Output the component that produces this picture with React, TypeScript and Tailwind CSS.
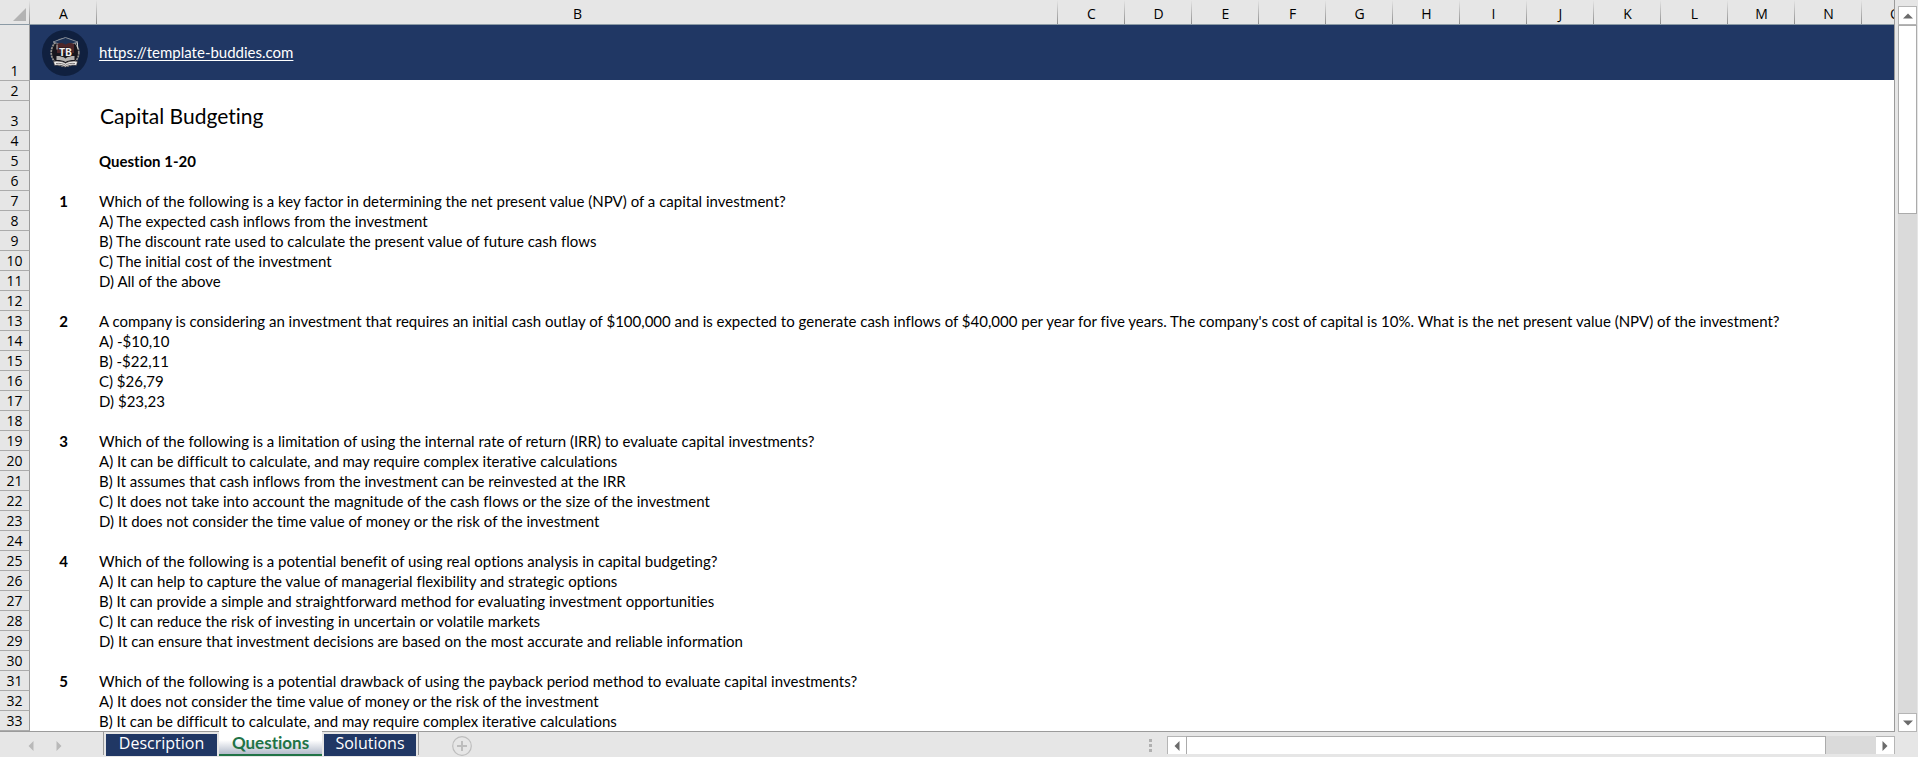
import React from "react";

type Row = { n: number; a?: string; b?: string };

const columns = ["C", "D", "E", "F", "G", "H", "I", "J", "K", "L", "M", "N", "O"];

const rows: Row[] = [
  { n: 6 },
  { n: 7, a: "1", b: "Which of the following is a key factor in determining the net present value (NPV) of a capital investment?" },
  { n: 8, b: "A) The expected cash inflows from the investment" },
  { n: 9, b: "B) The discount rate used to calculate the present value of future cash flows" },
  { n: 10, b: "C) The initial cost of the investment" },
  { n: 11, b: "D) All of the above" },
  { n: 12 },
  { n: 13, a: "2", b: "A company is considering an investment that requires an initial cash outlay of $100,000 and is expected to generate cash inflows of $40,000 per year for five years. The company's cost of capital is 10%. What is the net present value (NPV) of the investment?" },
  { n: 14, b: "A) -$10,10" },
  { n: 15, b: "B) -$22,11" },
  { n: 16, b: "C) $26,79" },
  { n: 17, b: "D) $23,23" },
  { n: 18 },
  { n: 19, a: "3", b: "Which of the following is a limitation of using the internal rate of return (IRR) to evaluate capital investments?" },
  { n: 20, b: "A) It can be difficult to calculate, and may require complex iterative calculations" },
  { n: 21, b: "B) It assumes that cash inflows from the investment can be reinvested at the IRR" },
  { n: 22, b: "C) It does not take into account the magnitude of the cash flows or the size of the investment" },
  { n: 23, b: "D) It does not consider the time value of money or the risk of the investment" },
  { n: 24 },
  { n: 25, a: "4", b: "Which of the following is a potential benefit of using real options analysis in capital budgeting?" },
  { n: 26, b: "A) It can help to capture the value of managerial flexibility and strategic options" },
  { n: 27, b: "B) It can provide a simple and straightforward method for evaluating investment opportunities" },
  { n: 28, b: "C) It can reduce the risk of investing in uncertain or volatile markets" },
  { n: 29, b: "D) It can ensure that investment decisions are based on the most accurate and reliable information" },
  { n: 30 },
  { n: 31, a: "5", b: "Which of the following is a potential drawback of using the payback period method to evaluate capital investments?" },
  { n: 32, b: "A) It does not consider the time value of money or the risk of the investment" },
  { n: 33, b: "B) It can be difficult to calculate, and may require complex iterative calculations" },
];

function Logo() {
  return (
    <svg viewBox="0 0 46 46" className="mx-auto block size-[46px]" role="img" aria-label="Template Buddies">
      <circle cx="23" cy="23" r="23" fill="#10203f" />
      <circle cx="23" cy="22.500" r="13.800" fill="#17161d" stroke="#96938f" strokeWidth="1.700" strokeDasharray="2.200 0.700" />
      <path d="M11 12 23.500 7.500 36 12l-12.500 4z" fill="#1d3153" stroke="#8f949d" strokeWidth="0.900" />
      <path d="M15 14c3-1.500 6-1.300 8.500.7 2.500-2 5.500-2.200 8.500-.7v9H15z" fill="#4d2629" />
      <path d="M35.500 12.500v6M15 14.500v5" stroke="#c9c9c9" strokeWidth="1" />
      <path d="M14.500 26c3.500 0 7 .6 9 2.500 2-1.900 5.500-2.500 9-2.500v4c-3.500 0-7 .6-9 2-2-1.400-5.500-2-9-2z" fill="#b3b1b0" />
      <text x="23.300" y="26.300" textAnchor="middle" fontSize="11" className="font-['DejaVu_Sans_Mono',monospace] font-bold" fill="#f4f2f2" stroke="#17161d" strokeWidth="1" paintOrder="stroke">TB</text>
      <path d="M11.500 31.500c4.500-1 9-.3 12 1.700 3-2 7.500-2.700 12-1.700l-1 4c-4-.8-8-.3-11 1.500-3-1.800-7-2.300-11-1.500z" fill="#efedeb" stroke="#2a2426" strokeWidth="0.600" />
      <path d="M14 33.500c4-.5 7 .2 9.500 1.800 2.500-1.600 5.500-2.300 9.500-1.800" stroke="#4a4446" strokeWidth="0.700" fill="none" />
    </svg>
  );
}

function Arrow({ d, className }: { d: string; className: string }) {
  return (
    <svg viewBox="0 0 10 10" className={className} aria-hidden="true">
      <path d={d} fill="currentColor" />
    </svg>
  );
}

const LEFT = "M7.500 0v10L2.500 5z";
const RIGHT = "M2.500 0v10l5-5z";
const UP = "M0 7.500h10L5 2.500z";
const DOWN = "M0 2.500h10L5 7.500z";

const colHead =
  "relative h-[25px] border-b border-[#8b9aa5] p-0 pt-1 text-center align-middle text-[14px] leading-5 font-normal";

function Separator() {
  return <span className="absolute top-0 right-0 h-6 w-px bg-linear-to-b from-[#e6e6e6] to-[#8e8e8e]" />;
}

function RowHead({ n }: { n: number }) {
  return (
    <th
      scope="row"
      className="border-r border-b border-r-[#9b9b9b] border-b-[#ababab] bg-[#e6e6e6] p-0 text-center align-bottom font-['Open_Sans','Noto_Sans',sans-serif] text-[14px] leading-[18px] font-normal"
    >
      {n}
    </th>
  );
}

export default function App() {
  return (
    <div className="flex min-h-screen flex-col overflow-hidden bg-[#e6e6e6] font-['Lato',sans-serif] text-[15px] text-black [font-variant-ligatures:none]">
      <div className="flex">
        <main className="min-w-0 flex-1 overflow-hidden border-r border-b border-[#9b9b9b] bg-white">
          <table className="w-[1929px] table-fixed border-separate border-spacing-0">
            <colgroup>
              <col className="w-[30px]" />
              <col className="w-[67px]" />
              <col className="w-[961px]" />
              {columns.map((c) => (
                <col key={c} className="w-[67px]" />
              ))}
            </colgroup>
            <thead className="bg-[#e6e6e6] font-['Open_Sans','Noto_Sans',sans-serif]">
              <tr>
                <td className={colHead}>
                  <svg viewBox="0 0 13 13" className="ml-[13px] size-[13px]" aria-hidden="true">
                    <path d="M13 0v13H0z" fill="#b3b3b3" />
                  </svg>
                  <Separator />
                </td>
                {["A", "B", ...columns].map((c) => (
                  <th key={c} scope="col" className={colHead}>
                    {c}
                    <Separator />
                  </th>
                ))}
              </tr>
            </thead>
            <tbody>
              <tr className="h-14">
                <RowHead n={1} />
                <td className="border-b border-white bg-[#203764] bg-clip-padding p-0 pl-[3px] align-middle">
                  <Logo />
                </td>
                <td colSpan={14} className="border-b border-white bg-[#203764] bg-clip-padding p-0 pl-[2px] align-middle">
                  <a href="https://template-buddies.com" className="text-white underline underline-offset-2">
                    https://template-buddies.com
                  </a>
                </td>
              </tr>
              <tr className="h-5">
                <RowHead n={2} />
                <td colSpan={15} className="p-0" />
              </tr>
              <tr className="h-[30px]">
                <RowHead n={3} />
                <td className="p-0" />
                <td colSpan={14} className="p-0 pl-[3px] align-bottom">
                  <h1 className="text-[21px] leading-[30px]">Capital Budgeting</h1>
                </td>
              </tr>
              <tr className="h-5">
                <RowHead n={4} />
                <td colSpan={15} className="p-0" />
              </tr>
              <tr className="h-5">
                <RowHead n={5} />
                <td className="p-0" />
                <td colSpan={14} className="p-0 pl-[2px] align-bottom">
                  <h2 className="leading-5 font-bold">Question 1-20</h2>
                </td>
              </tr>
              {rows.map((r) => (
                <tr key={r.n} className="h-5">
                  <RowHead n={r.n} />
                  <td className="p-0 text-center align-bottom leading-5 font-bold">{r.a}</td>
                  <td colSpan={14} className="p-0 pl-[2px] align-bottom leading-5 whitespace-nowrap">
                    {r.b}
                  </td>
                </tr>
              ))}
            </tbody>
          </table>
        </main>
        <div className="flex w-[23px] flex-col pt-[6px] pr-px pl-[3px] text-[#6b6b6b]">
          <button aria-label="Scroll up" className="flex h-[19px] items-center justify-center border border-[#b5b5b5] bg-white">
            <Arrow d={UP} className="size-[10px]" />
          </button>
          <div className="flex-1 bg-[#dadada]">
            <div className="h-[189px] border border-[#ababab] bg-white" />
          </div>
          <button aria-label="Scroll down" className="flex h-[19px] items-center justify-center border border-[#b5b5b5] bg-white">
            <Arrow d={DOWN} className="size-[10px]" />
          </button>
        </div>
      </div>

      <footer className="flex h-[25px] items-start justify-between">
        <nav aria-label="Sheets" className="flex h-[25px] items-start">
          <div className="flex w-[103px] gap-[18px] pt-[9px] pl-[26px] text-[#b9b9b9]">
            <button aria-label="Previous sheet">
              <Arrow d={LEFT} className="size-[10px]" />
            </button>
            <button aria-label="Next sheet">
              <Arrow d={RIGHT} className="size-[10px]" />
            </button>
          </div>
          <div className="flex h-[23px] gap-[2px] border-x border-[#9b9b9b] px-[2px] pt-[2px] text-[17px] leading-[17px]">
            <button className="h-[22px] w-[111px] bg-[#203764] pb-1 font-['Open_Sans','Noto_Sans',sans-serif] text-[16px] text-white">
              Description
            </button>
            <button
              aria-current="page"
              className="-mt-[3px] h-[25px] w-[103px] border-b-2 border-[#217346] bg-linear-to-b from-white from-40% to-[#b4bccb] pb-[1px] font-bold text-[#217346]"
            >
              Questions
            </button>
            <button className="h-[22px] w-[92px] bg-[#203764] pb-1 font-['Open_Sans','Noto_Sans',sans-serif] text-[16px] text-white">
              Solutions
            </button>
          </div>
          <button aria-label="New sheet" className="mt-1 ml-[33px] text-[#bdbdbd]">
            <svg viewBox="0 0 20 20" className="size-5" aria-hidden="true" fill="none" stroke="currentColor">
              <circle cx="10" cy="10" r="9.300" strokeWidth="1.200" />
              <path d="M10 5v10M5 10h10" strokeWidth="2" />
            </svg>
          </button>
        </nav>
        <div className="flex w-[769px] items-center pt-1 pr-[23px]">
          <div className="mr-[15px] flex w-[3px] flex-col gap-[2px]">
            <span className="size-[3px] bg-[#b0b0b0]" />
            <span className="size-[3px] bg-[#b0b0b0]" />
            <span className="size-[3px] bg-[#b0b0b0]" />
          </div>
          <button aria-label="Scroll left" className="flex h-[18px] w-[19px] items-center justify-center border-t border-l border-[#b5b5b5] bg-white text-[#6b6b6b]">
            <Arrow d={LEFT} className="size-[10px]" />
          </button>
          <div className="flex h-[18px] flex-1 bg-[#dadada]">
            <div className="w-[640px] border border-b-0 border-[#ababab] bg-white" />
          </div>
          <button aria-label="Scroll right" className="flex h-[18px] w-[19px] items-center justify-center border-t border-r border-[#b5b5b5] bg-white text-[#6b6b6b]">
            <Arrow d={RIGHT} className="size-[10px]" />
          </button>
        </div>
      </footer>
    </div>
  );
}
